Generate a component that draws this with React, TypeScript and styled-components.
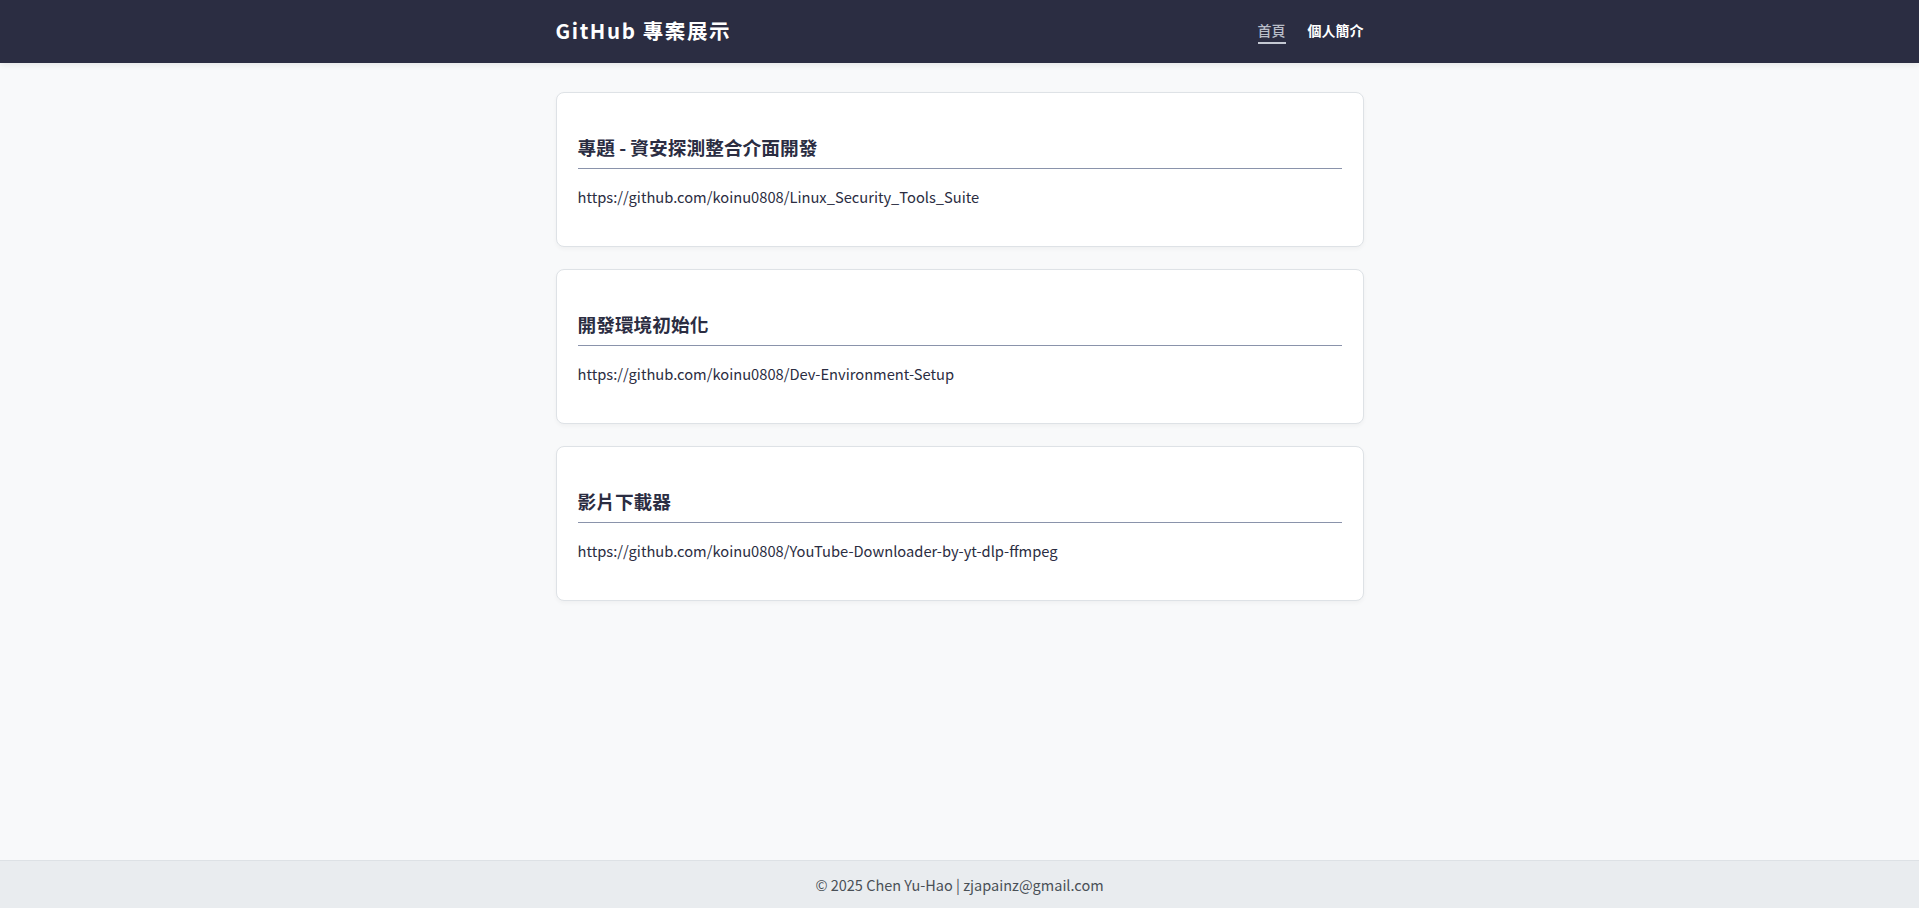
import React from "react";
import styled, { createGlobalStyle } from "styled-components";

const Global = createGlobalStyle`
  html, body { margin: 0; padding: 0; }
  body {
    background: #f8f9fa;
    font-family: "Noto Sans CJK TC", "Noto Sans", sans-serif;
    color: #2b2d42;
  }
`;

const Page = styled.div`
  min-height: 908px;
  display: flex;
  flex-direction: column;
`;

const Header = styled.header`
  background: #2b2d42;
  height: 63px;
  box-shadow: 0 2px 6px rgba(0, 0, 0, 0.08);
`;

const HeaderInner = styled.div`
  box-sizing: border-box;
  width: 808px;
  margin: 0 auto;
  height: 100%;
  padding-bottom: 4px;
  display: flex;
  align-items: center;
  justify-content: space-between;
`;

const Brand = styled.div`
  color: #ffffff;
  font-size: 20.5px;
  font-weight: 700;
  letter-spacing: 1.6px;
`;

const Nav = styled.nav`
  display: flex;
  gap: 22px;
  align-items: center;
`;

const NavLink = styled.a<{ $active?: boolean }>`
  font-size: 14px;
  font-weight: ${(p) => (p.$active ? 500 : 700)};
  text-decoration: none;
  color: ${(p) => (p.$active ? "#b9bdc8" : "#ffffff")};
  padding-bottom: 2px;
  border-bottom: 2px solid ${(p) => (p.$active ? "#c4c8d2" : "transparent")};
  margin-top: 4px;
  cursor: pointer;
`;

const Main = styled.main`
  flex: 1;
  width: 808px;
  margin: 0 auto;
  padding-top: 29px;
  display: flex;
  flex-direction: column;
  gap: 22px;
`;

const Card = styled.section`
  background: #ffffff;
  border: 1px solid #dee2e6;
  border-radius: 8px;
  padding: 22px 21px 28px;
  box-shadow: 0 2px 4px rgba(0, 0, 0, 0.04);
`;

const Title = styled.h3`
  font-size: 18.72px;
  font-weight: 700;
  margin: 18px 0 0;
  padding-bottom: 8px;
  border-bottom: 1px solid #8a93ab;
  color: #2b2d42;
`;

const Link = styled.a`
  display: block;
  font-size: 14.7px;
  color: #2b2d42;
  text-decoration: none;
  margin: 17px 0 11px;
`;

const Footer = styled.footer`
  background: #e9ecef;
  height: 47px;
  border-top: 1px solid #dde1e5;
  display: flex;
  align-items: center;
  justify-content: center;
  font-size: 14.5px;
  color: #495057;
`;

const projects = [
  {
    title: "專題 - 資安探測整合介面開發",
    url: "https://github.com/koinu0808/Linux_Security_Tools_Suite",
  },
  {
    title: "開發環境初始化",
    url: "https://github.com/koinu0808/Dev-Environment-Setup",
  },
  {
    title: "影片下載器",
    url: "https://github.com/koinu0808/YouTube-Downloader-by-yt-dlp-ffmpeg",
  },
];

export default function App() {
  return (
    <Page>
      <Global />
      <Header>
        <HeaderInner>
          <Brand>GitHub 專案展示</Brand>
          <Nav>
            <NavLink $active>首頁</NavLink>
            <NavLink>個人簡介</NavLink>
          </Nav>
        </HeaderInner>
      </Header>
      <Main>
        {projects.map((p) => (
          <Card key={p.url}>
            <Title>{p.title}</Title>
            <Link href={p.url}>{p.url}</Link>
          </Card>
        ))}
      </Main>
      <Footer>© 2025 Chen Yu-Hao | zjapainz@gmail.com</Footer>
    </Page>
  );
}
